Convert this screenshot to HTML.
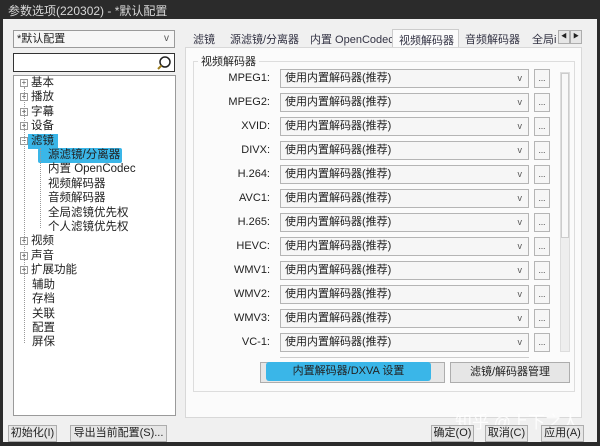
<!DOCTYPE html><html><head><meta charset="utf-8"><style>
*{box-sizing:border-box;margin:0;padding:0}
body{width:600px;height:446px;background:#2b2b2b;position:relative;overflow:hidden;font-family:"Liberation Sans","Noto Sans CJK SC",sans-serif;font-size:11px;color:#222}
.a{position:absolute}
.win{left:3px;top:19px;width:594px;height:423px;background:#f0f0f0}
.title{left:8px;top:2px;color:#d8d8d8;font-size:12px}
.box{border:1px solid #9a9a9a;background:#fff}
.btn{border:1px solid #adadad;background:#e6e6e6;text-align:center;line-height:15px;font-size:11px}
.ti{font-size:11.5px;line-height:14.4px}
.pm{display:inline-block;width:8px;height:8px;border:1px solid #999;font-size:8px;line-height:6px;text-align:center;color:#555;vertical-align:1px;margin-right:3px}
.cb{border:1px solid #b5b5b5;background:#f6f6f6;height:19px;line-height:17px;padding-left:4px;font-size:11px}
.lab{width:90px;text-align:right;font-size:11px}
</style></head><body>
<div class="a title">参数选项(220302) - *默认配置</div>
<div class="a win"></div>
<div class="a box" style="left:13px;top:30px;width:162px;height:18px;background:#f6f6f6;padding-left:3px;line-height:16px">*默认配置<span style="position:absolute;right:5px;font-size:10px;color:#555">v</span></div>
<div class="a box" style="left:13px;top:53px;width:162px;height:19px;border-color:#333"><svg class="a" style="right:2px;top:1px" width="16" height="16"><circle cx="9" cy="7" r="5" fill="none" stroke="#222" stroke-width="1.5"/><line x1="5.5" y1="10.5" x2="2" y2="14" stroke="#a08020" stroke-width="2"/></svg></div>
<div class="a box" style="left:13px;top:75px;width:163px;height:341px"></div>
<div class="a" style="left:28px;top:134px;width:30px;height:15px;background:#3ab6e8"></div>
<div class="a" style="left:38px;top:148px;width:84px;height:15px;background:#3ab6e8;border-radius:2px"></div>
<div class="a" style="left:24px;top:87px;width:0;height:256px;border-left:1px dotted #999"></div>
<div class="a" style="left:40px;top:148px;width:0;height:80px;border-left:1px dotted #999"></div>
<div class="a ti" style="left:20px;top:76px">
<div><span class="pm">+</span>基本</div><div><span class="pm">+</span>播放</div><div><span class="pm">+</span>字幕</div><div><span class="pm">+</span>设备</div><div><span class="pm">−</span>滤镜</div>
<div style="padding-left:28px">源滤镜/分离器</div><div style="padding-left:28px">内置 OpenCodec</div><div style="padding-left:28px">视频解码器</div><div style="padding-left:28px">音频解码器</div><div style="padding-left:28px">全局滤镜优先权</div><div style="padding-left:28px">个人滤镜优先权</div>
<div><span class="pm">+</span>视频</div><div><span class="pm">+</span>声音</div><div><span class="pm">+</span>扩展功能</div><div style="padding-left:12px">辅助</div><div style="padding-left:12px">存档</div><div style="padding-left:12px">关联</div><div style="padding-left:12px">配置</div><div style="padding-left:12px">屏保</div></div>
<div class="a btn" style="left:8px;top:425px;width:49px;height:17px">初始化(I)</div>
<div class="a btn" style="left:70px;top:425px;width:97px;height:17px">导出当前配置(S)...</div>
<div class="a" style="left:193px;top:31px;font-size:11px;color:#334">滤镜</div>
<div class="a" style="left:230px;top:31px;font-size:11px;color:#334">源滤镜/分离器</div>
<div class="a" style="left:310px;top:31px;font-size:11px;color:#334">内置 OpenCodec</div>
<div class="a" style="left:392px;top:29px;width:67px;height:19px;background:#fbfbfb;border:1px solid #ccc;border-bottom:none;padding:2px 0 0 6px;font-size:11px;color:#334">视频解码器</div>
<div class="a" style="left:465px;top:31px;font-size:11px;color:#334">音频解码器</div>
<div class="a" style="left:532px;top:31px;font-size:11px;color:#334">全局i</div>
<div class="a btn" style="left:558px;top:30px;width:12px;height:14px;font-size:6px;line-height:12px">◀</div>
<div class="a btn" style="left:570px;top:30px;width:12px;height:14px;font-size:6px;line-height:12px">▶</div>
<div class="a" style="left:185px;top:47px;width:397px;height:371px;background:#fbfbfb;border:1px solid #d8d8d8"></div>
<div class="a" style="left:193px;top:61px;width:382px;height:331px;border:1px solid #ddd"></div>
<div class="a" style="left:198px;top:53px;background:#fbfbfb;padding:0 3px;font-size:11px">视频解码器</div>
<div class="a" style="left:560px;top:72px;width:10px;height:280px;background:#eee;border:1px solid #ddd"></div>
<div class="a" style="left:561px;top:73px;width:8px;height:165px;background:#f8f8f8;border:1px solid #ccc"></div>
<div id="rows"></div>
<div class="a" style="left:260px;top:362px;width:185px;height:21px;border:1px solid #adadad;background:#e6e6e6"></div>
<div class="a" style="left:266px;top:362px;width:165px;height:19px;background:#3ab6e8;border-radius:3px;text-align:center;line-height:19px;font-size:11px">内置解码器/DXVA 设置</div>
<div class="a btn" style="left:450px;top:362px;width:120px;height:21px;line-height:19px">滤镜/解码器管理</div>
<div class="a" style="left:455px;top:408px;font-size:17px;color:rgba(255,255,255,.85)">知乎 @上下之人</div>
<div class="a btn" style="left:431px;top:425px;width:43px;height:17px">确定(O)</div>
<div class="a btn" style="left:485px;top:425px;width:43px;height:17px">取消(C)</div>
<div class="a btn" style="left:541px;top:425px;width:43px;height:17px">应用(A)</div>
<script>
var n=["MPEG1:","MPEG2:","XVID:","DIVX:","H.264:","AVC1:","H.265:","HEVC:","WMV1:","WMV2:","WMV3:","VC-1:"],h="";
n.forEach(function(s,i){var y=69+i*24;
h+='<div class="a lab" style="left:180px;top:'+(y+3)+'px">'+s+'</div><div class="a cb" style="left:280px;top:'+y+'px;width:249px">使用内置解码器(推荐)<span style="position:absolute;right:6px;font-size:9px;color:#555">v</span></div><div class="a cb" style="left:534px;top:'+y+'px;width:16px;padding:0;text-align:center;font-size:8px">...</div>';});
h+='<div class="a" style="left:280px;top:357px;width:249px;height:2px;border-top:1px solid #ccc"></div>';
document.getElementById("rows").innerHTML=h;
</script>
</body></html>
